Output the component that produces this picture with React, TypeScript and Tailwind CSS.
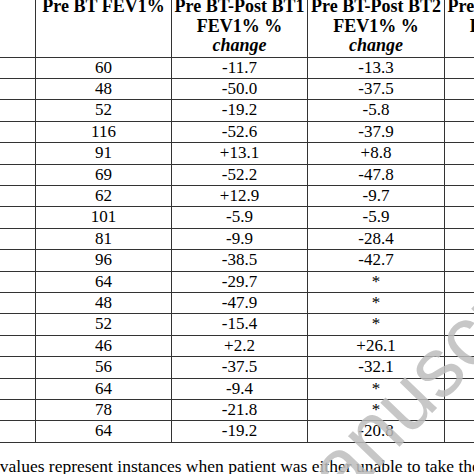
const rows: [string, string, string][] = [
  ['60', '-11.7', '-13.3'],
  ['48', '-50.0', '-37.5'],
  ['52', '-19.2', '-5.8'],
  ['116', '-52.6', '-37.9'],
  ['91', '+13.1', '+8.8'],
  ['69', '-52.2', '-47.8'],
  ['62', '+12.9', '-9.7'],
  ['101', '-5.9', '-5.9'],
  ['81', '-9.9', '-28.4'],
  ['96', '-38.5', '-42.7'],
  ['64', '-29.7', '*'],
  ['48', '-47.9', '*'],
  ['52', '-15.4', '*'],
  ['46', '+2.2', '+26.1'],
  ['56', '-37.5', '-32.1'],
  ['64', '-9.4', '*'],
  ['78', '-21.8', '*'],
  ['64', '-19.2', '-20.8'],
];

function ChangeHeader({ n }: { n: number }) {
  return (
    <>
      <div>Pre BT-Post BT{n}</div>
      <div>FEV1% %</div>
      <div className="italic">change</div>
    </>
  );
}

const cell = 'border border-[#333] p-0';
const head = 'border border-[#333] px-0 pt-[6px] pb-[1px] align-top whitespace-nowrap';

export default function App() {
  return (
    <div className="relative h-[474px] w-[474px] overflow-hidden bg-white font-['Liberation_Serif',serif] text-black">
      <table className="-mt-[10px] -ml-[66px] w-[646px] max-w-none table-fixed border-collapse">
        <colgroup>
          <col className="w-[101px]" />
          <col className="w-[136px]" />
          <col className="w-[136px]" />
          <col className="w-[137px]" />
          <col className="w-[136px]" />
        </colgroup>
        <thead>
          <tr className="text-[18px] font-bold leading-[19.5px]">
            <th className={head}></th>
            <th className={head}>Pre BT FEV1%</th>
            <th className={head}>
              <ChangeHeader n={1} />
            </th>
            <th className={head}>
              <ChangeHeader n={2} />
            </th>
            <th className={head}>
              <ChangeHeader n={3} />
            </th>
          </tr>
        </thead>
        <tbody className="text-[17px] leading-[20.4px]">
          {rows.map((r, i) => (
            <tr key={i}>
              <td className={cell}></td>
              <td className={`${cell} text-center`}>{r[0]}</td>
              <td className={`${cell} text-center`}>{r[1]}</td>
              <td className={`${cell} text-center`}>{r[2]}</td>
              <td className={cell}></td>
            </tr>
          ))}
        </tbody>
      </table>

      <p className="mt-[13px] -ml-[9px] whitespace-nowrap text-[17.5px] leading-[20px]">
        *values represent instances when patient was either unable to take the test
      </p>

      {/* watermark */}
      <span className="pointer-events-none absolute left-[295px] top-[484px] origin-[0px_71px] -rotate-[46deg] whitespace-nowrap font-['Liberation_Sans',sans-serif] text-[84px] leading-none text-[#bdbdbd]/85">
        manuscript
      </span>
    </div>
  );
}
